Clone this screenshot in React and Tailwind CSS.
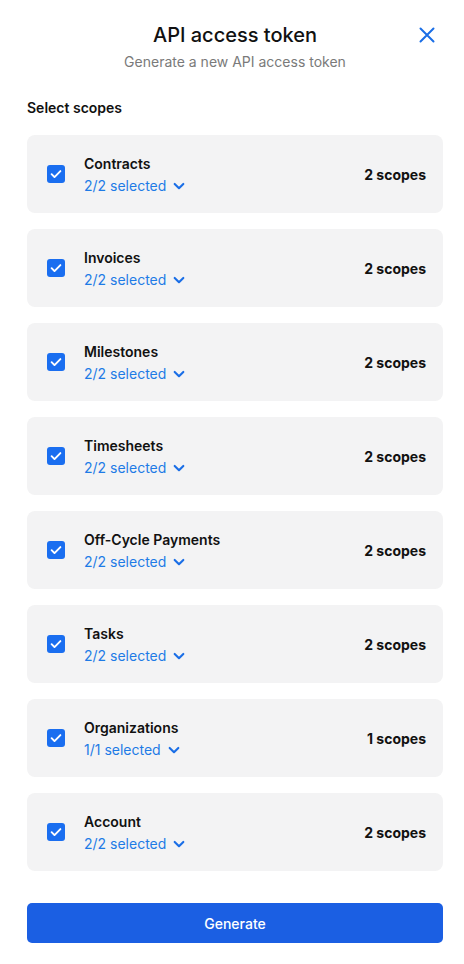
import React from "react";

const SCOPES = [
  { name: "Contracts", selected: "2/2", count: 2 },
  { name: "Invoices", selected: "2/2", count: 2 },
  { name: "Milestones", selected: "2/2", count: 2 },
  { name: "Timesheets", selected: "2/2", count: 2 },
  { name: "Off-Cycle Payments", selected: "2/2", count: 2 },
  { name: "Tasks", selected: "2/2", count: 2 },
  { name: "Organizations", selected: "1/1", count: 1 },
  { name: "Account", selected: "2/2", count: 2 },
];

const ScopeCard = ({ scope }) => (
  <div className="h-[78px] rounded-lg bg-[#f3f3f4] flex items-center pl-5 pr-[17px]">
    <div className="w-[18px] h-[18px] rounded-[3px] bg-[#1a6ef0] flex items-center justify-center shrink-0">
      <svg width="14" height="14" viewBox="0 0 14 14" fill="none">
        <path d="M2.6 7.2l2.9 2.9 5.9-6" stroke="white" strokeWidth="1.9" strokeLinecap="round" strokeLinejoin="round" />
      </svg>
    </div>
    <div className="ml-[19px] flex-1 pt-[1px]">
      <div className="text-[14px] leading-[22px] font-semibold text-[#111]">{scope.name}</div>
      <div className="flex items-center text-[14px] leading-[22px] text-[#1e7be6]">
        <span>{scope.selected} selected</span>
        <svg className="ml-[6px]" width="14" height="14" viewBox="0 0 12 12" fill="none">
          <path d="M2.3 4.2L6 7.9l3.7-3.7" stroke="#1a6ee6" strokeWidth="1.8" strokeLinecap="round" strokeLinejoin="round" />
        </svg>
      </div>
    </div>
    <div className="text-[14px] font-bold text-[#111]">{scope.count} scopes</div>
  </div>
);

export default function App() {
  return (
    <div className="w-[464px] min-h-[964px] bg-white font-['Inter',sans-serif] pl-[27px] pr-[21px]">
      {/* Header */}
      <div className="relative pt-[21px] text-center">
        <h1 className="text-[20px] leading-[28px] font-medium text-[#111]">API access token</h1>
        <p className="mt-[3px] text-[14px] leading-[20px] text-[#7a7a7a]">Generate a new API access token</p>
        <button className="absolute right-[7px] top-[26px] text-[#1a6ee6]">
          <svg width="18" height="18" viewBox="0 0 18 18" fill="none">
            <path d="M2.5 2.5l13 13M15.5 2.5l-13 13" stroke="currentColor" strokeWidth="2" strokeLinecap="round" />
          </svg>
        </button>
      </div>

      <div className="mt-[26px] text-[14px] leading-[20px] font-semibold text-[#111]">Select scopes</div>

      <div className="mt-[17px] flex flex-col gap-4">
        {SCOPES.map((s) => (
          <ScopeCard key={s.name} scope={s} />
        ))}
      </div>

      <button className="mt-[32px] w-full h-10 rounded-[5px] bg-[#1b5fe3] text-white text-[14px] font-medium">
        Generate
      </button>
    </div>
  );
}
